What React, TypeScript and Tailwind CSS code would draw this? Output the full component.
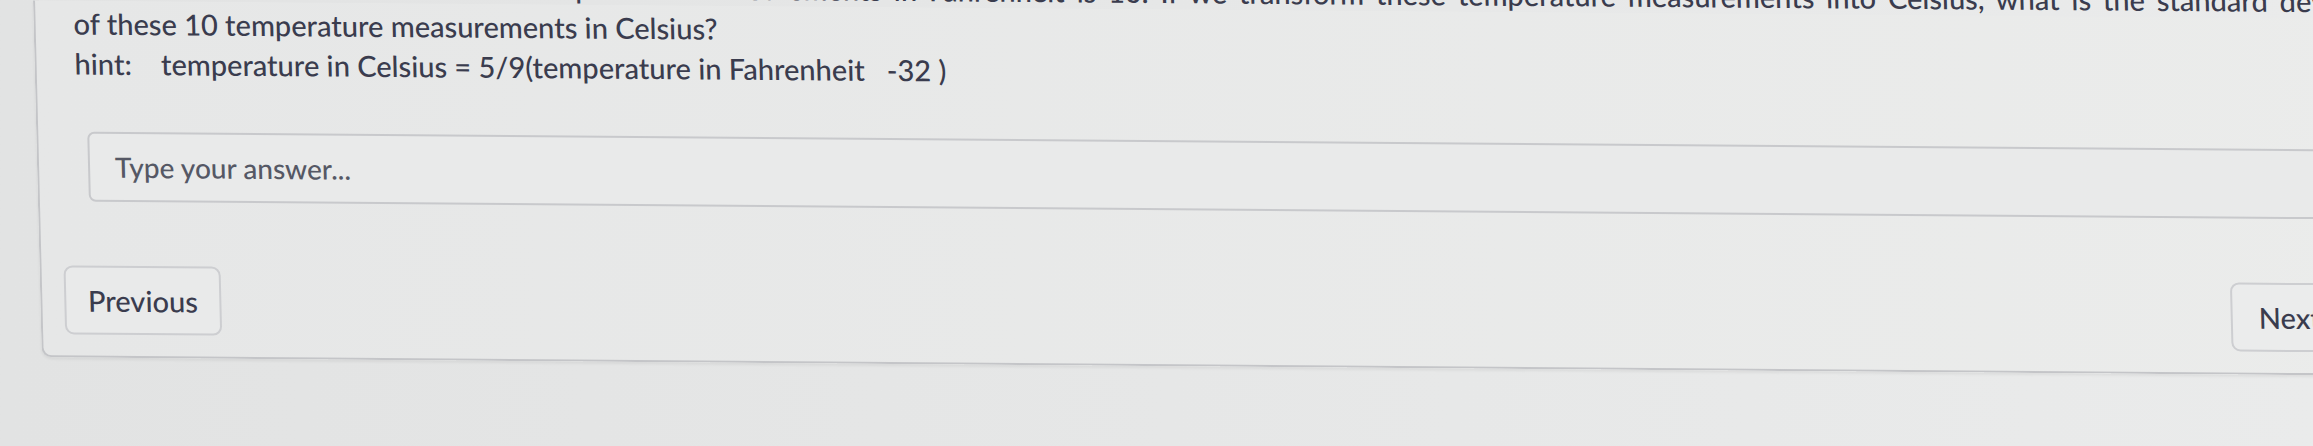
import React from "react";

export default function App() {
  const font = { fontFamily: "Lato, 'Noto Sans', sans-serif" };
  return (
    <div
      className="w-[2313px] h-[446px] overflow-hidden bg-gradient-to-r from-[#e2e3e3] via-[#e6e7e7] to-[#eaebeb]"
      style={font}
    >
      <div className="origin-top-left skew-y-[0.45deg] skew-x-[1.4deg] w-[2500px]">
        <div className="ml-[33px] w-[2420px] h-[357px] border-l-2 border-b-2 border-[#c4c5c8] rounded-bl-[10px] bg-gradient-to-r from-[#e6e7e7] to-[#ebeceb] shadow-[0_2px_3px_rgba(0,0,0,0.06)] flex flex-col">
          <div className="-mt-[37px] pl-[38px] text-[29px] leading-[40px] font-medium text-[#3a3c4e] whitespace-nowrap">
            <div className="[word-spacing:4.5px]">
              The standard deviation of several temperature measurements in
              Fahrenheit is 10. If we transform these temperature measurements
              into Celsius, what is the standard deviation
            </div>
            <div>of these 10 temperature measurements in Celsius?</div>
            <div>
              hint:&nbsp;&nbsp;&nbsp;&nbsp;temperature in Celsius =
              5/9(temperature in Fahrenheit&nbsp;&nbsp;&nbsp;-32 )
            </div>
          </div>
          <div className="mt-[48px] ml-[49px] h-[70px] w-[2360px] border-2 border-[#c8c9cc] rounded-[7px] bg-[#e9eaea] flex items-center pl-[25px] text-[28px] font-medium text-[#555865]">
            Type your answer...
          </div>
          <div className="mt-[64px] pl-[22px] flex items-start w-[2360px]">
            <div className="h-[69px] w-[157px] border-2 border-[#cdced1] rounded-[9px] bg-[#e9eaea] flex items-center justify-center text-[29px] font-medium text-[#3a3c4e]">
              Previous
            </div>
            <div className="ml-[2009px] h-[69px] w-[130px] border-2 border-[#cdced1] rounded-[9px] bg-[#ebecec] flex items-center pl-[26px] text-[29px] font-medium text-[#3a3c4e]">
              Next
            </div>
          </div>
        </div>
      </div>
    </div>
  );
}
